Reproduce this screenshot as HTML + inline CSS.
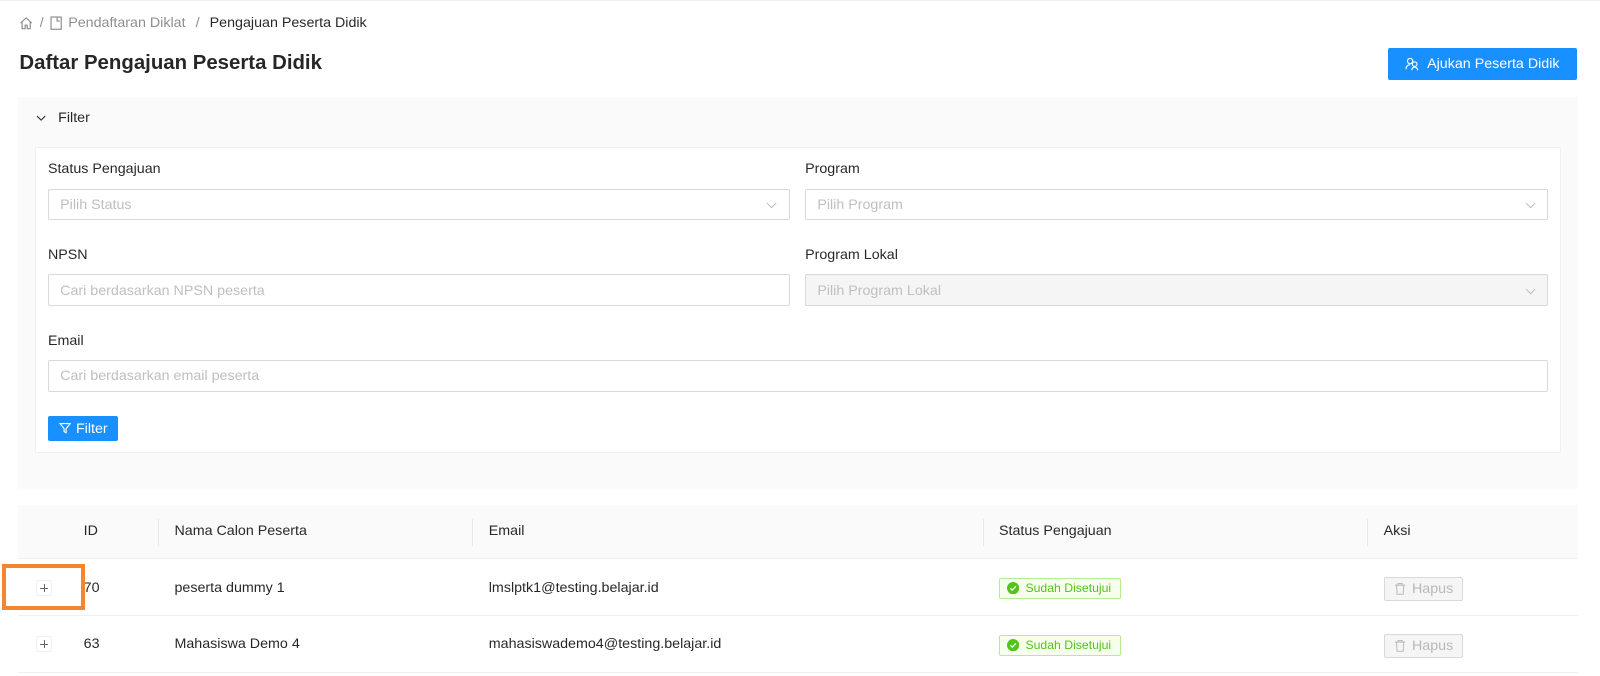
<!DOCTYPE html>
<html><head><meta charset="utf-8"><style>
*{box-sizing:border-box;margin:0;padding:0}
html,body{width:1600px;height:676px;overflow:hidden;background:#fff}
#w{zoom:1.0204;position:relative;width:1568px;height:662px;font-family:"Liberation Sans",sans-serif;color:rgba(0,0,0,.85);font-size:14px;border-top:1px solid #eee}
.a{position:absolute}
.bc{left:19px;top:14px;font-size:14px;color:rgba(0,0,0,.45);display:flex;align-items:center;gap:6px}
.bc b{font-weight:normal;color:rgba(0,0,0,.85)}
h1{position:absolute;left:19px;top:50px;font-size:20px;font-weight:bold;color:rgba(0,0,0,.85)}
.btn{left:1360px;top:46px;width:185px;height:31px;background:#1890ff;color:#fff;border-radius:2px;display:flex;align-items:center;justify-content:center;gap:8px;font-size:14px}
.panel{left:18px;top:94px;width:1528px;height:384px;background:#fafafa}
.inner{left:34px;top:143px;width:1496px;height:300px;background:#fff;border:1px solid #f0f0f0}
.lbl{font-size:14px;color:rgba(0,0,0,.85)}
.inp{height:31px;border:1px solid #d9d9d9;border-radius:2px;background:#fff;color:#bfbfbf;font-size:14px;padding:7px 11px}
.dis{background:#f5f5f5}
.chev{position:absolute;right:11px;top:10px}
.fb{left:47px;top:407px;width:69px;height:24px;background:#1890ff;color:#fff;border-radius:2px;display:flex;align-items:center;justify-content:center;gap:5px;font-size:14px}
.th{left:18px;top:494px;width:1528px;height:53px;background:#fafafa;border-bottom:1px solid #f0f0f0}
.div{position:absolute;top:508px;width:1px;height:26px;background:#e8e8e8}
.row{left:18px;width:1528px;height:56px;border-bottom:1px solid #f0f0f0}
.exp{position:absolute;left:35px;width:16px;height:16px;border:1px solid #f0f0f0;border-radius:2px}
.exp:before{content:"";position:absolute;left:3px;top:7px;width:8px;height:1px;background:#666}
.exp:after{content:"";position:absolute;left:7px;top:3px;width:1px;height:8px;background:#666}
.tag{position:absolute;left:979px;width:120px;height:21px;background:#f6ffed;border:1px solid #b7eb8f;border-radius:2px;color:#52c41a;font-size:12px;display:flex;align-items:center;padding-left:7px;gap:6px}
.del{position:absolute;left:1356px;width:78px;height:24px;background:#f5f5f5;border:1px solid #d9d9d9;border-radius:2px;color:rgba(0,0,0,.25);display:flex;align-items:center;justify-content:center;gap:6px;font-size:14px}
</style></head><body><div id="w">
<div class="a bc"><svg width="14" height="14" viewBox="0 0 14 14" fill="none" stroke="#888" stroke-width="1.1"><path d="M1.5 7L7 1.8 12.5 7M3 5.8V12.5h3V9h2v3.5h3V5.8"/></svg><span>/</span><svg width="12" height="14" viewBox="0 0 12 14" fill="none" stroke="#888" stroke-width="1.1"><rect x="1" y="1" width="10" height="12"/><path d="M7 1v4h2.5"/></svg><span>Pendaftaran Diklat</span><span>&nbsp;/&nbsp;</span><b>Pengajuan Peserta Didik</b></div>
<h1>Daftar Pengajuan Peserta Didik</h1>
<div class="a btn"><svg width="14" height="14" viewBox="0 0 14 14" fill="none" stroke="#fff" stroke-width="1.1"><circle cx="5" cy="4" r="2.6"/><path d="M1 12c0-3 2-4.5 4-4.5"/><circle cx="9.5" cy="7" r="2.3"/><path d="M6.5 13c.3-2 1.5-3 3-3s2.7 1 3 3"/></svg>Ajukan Peserta Didik</div>
<div class="a panel"></div>
<div class="a" style="left:35px;top:107px;display:flex;align-items:center;gap:12px"><svg width="10" height="10" viewBox="0 0 10 10" fill="none" stroke="#333" stroke-width="1.1"><path d="M1 3l4 4 4-4"/></svg><span>Filter</span></div>
<div class="a inner"></div>
<div class="a lbl" style="left:47px;top:157px">Status Pengajuan</div>
<div class="a inp" style="left:47px;top:184px;width:727px">Pilih Status<svg class="chev" width="11" height="10" viewBox="0 0 11 10" fill="none" stroke="#bbb"><path d="M1 3l4.5 4.5L10 3"/></svg></div>
<div class="a lbl" style="left:789px;top:157px">Program</div>
<div class="a inp" style="left:789px;top:184px;width:728px">Pilih Program<svg class="chev" width="11" height="10" viewBox="0 0 11 10" fill="none" stroke="#bbb"><path d="M1 3l4.5 4.5L10 3"/></svg></div>
<div class="a lbl" style="left:47px;top:241px">NPSN</div>
<div class="a inp" style="left:47px;top:268px;width:727px">Cari berdasarkan NPSN peserta</div>
<div class="a lbl" style="left:789px;top:241px">Program Lokal</div>
<div class="a inp dis" style="left:789px;top:268px;width:728px">Pilih Program Lokal<svg class="chev" width="11" height="10" viewBox="0 0 11 10" fill="none" stroke="#bbb"><path d="M1 3l4.5 4.5L10 3"/></svg></div>
<div class="a lbl" style="left:47px;top:325px">Email</div>
<div class="a inp" style="left:47px;top:352px;width:1470px">Cari berdasarkan email peserta</div>
<div class="a fb"><svg width="12" height="12" viewBox="0 0 12 12" fill="none" stroke="#fff" stroke-width="1.1"><path d="M1 1.5h10L7 6.5v4l-2-1v-3z"/></svg>Filter</div>
<div class="a th"></div>
<div class="a" style="left:82px;top:512px">ID</div>
<div class="div" style="left:155px"></div>
<div class="a" style="left:171px;top:512px">Nama Calon Peserta</div>
<div class="div" style="left:463px"></div>
<div class="a" style="left:479px;top:512px">Email</div>
<div class="div" style="left:963px"></div>
<div class="a" style="left:979px;top:512px">Status Pengajuan</div>
<div class="div" style="left:1340px"></div>
<div class="a" style="left:1356px;top:512px">Aksi</div>
<div class="a row" style="top:547px"></div>
<div class="a row" style="top:603px"></div>
<div class="exp" style="top:567px"></div>
<div class="a" style="left:82px;top:567px">70</div>
<div class="a" style="left:171px;top:567px">peserta dummy 1</div>
<div class="a" style="left:479px;top:567px">lmslptk1@testing.belajar.id</div>
<div class="tag" style="top:565px"><svg width="12" height="12" viewBox="0 0 12 12"><circle cx="6" cy="6" r="6" fill="#52c41a"/><path d="M3.3 6.2l1.8 1.7 3.6-3.6" fill="none" stroke="#fff" stroke-width="1.3"/></svg>Sudah Disetujui</div>
<div class="del" style="top:564px"><svg width="12" height="13" viewBox="0 0 12 13" fill="none" stroke="#bbb"><path d="M1 3h10M4 3V1.5h4V3M2.5 3l.5 9h6l.5-9"/></svg>Hapus</div>
<div class="exp" style="top:622px"></div>
<div class="a" style="left:82px;top:622px">63</div>
<div class="a" style="left:171px;top:622px">Mahasiswa Demo 4</div>
<div class="a" style="left:479px;top:622px">mahasiswademo4@testing.belajar.id</div>
<div class="tag" style="top:621px"><svg width="12" height="12" viewBox="0 0 12 12"><circle cx="6" cy="6" r="6" fill="#52c41a"/><path d="M3.3 6.2l1.8 1.7 3.6-3.6" fill="none" stroke="#fff" stroke-width="1.3"/></svg>Sudah Disetujui</div>
<div class="del" style="top:620px"><svg width="12" height="13" viewBox="0 0 12 13" fill="none" stroke="#bbb"><path d="M1 3h10M4 3V1.5h4V3M2.5 3l.5 9h6l.5-9"/></svg>Hapus</div>
<div class="a" style="left:2px;top:552px;width:81px;height:45px;border:4px solid #f5862e"></div>
</div></body></html>
